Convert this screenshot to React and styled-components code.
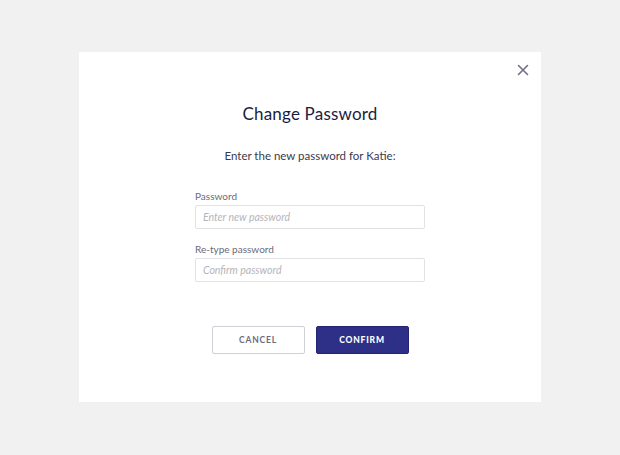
import React from 'react';
import styled, { createGlobalStyle } from 'styled-components';

const GlobalStyle = createGlobalStyle`
  html, body {
    margin: 0;
    padding: 0;
    background: #f1f1f1;
  }
  body {
    font-family: Lato, "Noto Sans", sans-serif;
  }
`;

const Page = styled.div`
  height: 455px;
  display: flex;
  justify-content: center;
  padding-top: 52px;
  box-sizing: border-box;
`;

const Modal = styled.div`
  position: relative;
  width: 462px;
  height: 350px;
  background: #ffffff;
  display: flex;
  flex-direction: column;
  align-items: center;
  box-sizing: border-box;
  padding-top: 51px;
`;

const Close = styled.button`
  position: absolute;
  top: 11px;
  right: 11px;
  width: 14px;
  height: 14px;
  padding: 0;
  border: none;
  background: none;
  cursor: pointer;
  display: flex;
`;

const Title = styled.h1`
  margin: 0;
  font-size: 17px;
  font-weight: 400;
  color: #1c1c3e;
  letter-spacing: 0.2px;
  line-height: 22px;
`;

const Subtitle = styled.p`
  margin: 23px 0 0;
  font-size: 11.5px;
  color: #3a3a4e;
  line-height: 16px;
`;

const Form = styled.div`
  width: 230px;
  margin-top: 25px;
  display: flex;
  flex-direction: column;
  gap: 13px;
`;

const Field = styled.label`
  display: flex;
  flex-direction: column;
  gap: 2px;
`;

const Label = styled.span`
  font-size: 10px;
  color: #6a6a7c;
  line-height: 14px;
`;

const Input = styled.input`
  height: 24px;
  box-sizing: border-box;
  border: 1px solid #e2e2e6;
  border-radius: 2px;
  padding: 0 7px;
  font-family: inherit;
  font-size: 10.5px;
  color: #333;
  outline: none;
  &::placeholder {
    color: #b4b4bc;
    font-style: italic;
  }
`;

const Actions = styled.div`
  display: flex;
  gap: 11px;
  margin-top: 44px;
`;

const Button = styled.button`
  width: 93px;
  height: 28px;
  box-sizing: border-box;
  border-radius: 2px;
  font-family: inherit;
  font-size: 8.5px;
  letter-spacing: 0.8px;
  cursor: pointer;
  border: 1px solid ${p => (p.$primary ? '#23236f' : '#cfcfd6')};
  background: ${p => (p.$primary ? '#2e2f86' : '#ffffff')};
  color: ${p => (p.$primary ? '#ffffff' : '#6b6b7e')};
  font-weight: ${p => (p.$primary ? 900 : 700)};
`;

export default function App() {
  return (
    <>
      <GlobalStyle />
      <Page>
        <Modal>
          <Close aria-label="Close">
            <svg width="14" height="14" viewBox="0 0 14 14">
              <path d="M2.5 2.5 L11.5 11.5 M11.5 2.5 L2.5 11.5" stroke="#6f6f86" strokeWidth="1.6" strokeLinecap="round" />
            </svg>
          </Close>
          <Title>Change Password</Title>
          <Subtitle>Enter the new password for Katie:</Subtitle>
          <Form>
            <Field>
              <Label>Password</Label>
              <Input type="password" placeholder="Enter new password" />
            </Field>
            <Field>
              <Label>Re-type password</Label>
              <Input type="password" placeholder="Confirm password" />
            </Field>
          </Form>
          <Actions>
            <Button>CANCEL</Button>
            <Button $primary>CONFIRM</Button>
          </Actions>
        </Modal>
      </Page>
    </>
  );
}
